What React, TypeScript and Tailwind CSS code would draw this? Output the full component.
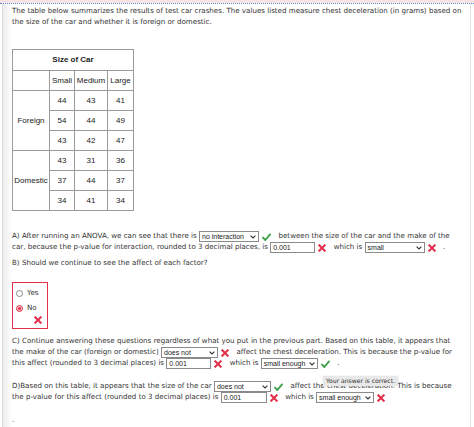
import React from 'react';

const txt = '#333333';

function Check() {
  return (
    <svg width="9" height="8" viewBox="0 0 9 8" className="mx-[3px] shrink-0">
      <path d="M1 4.6 L3.4 7 L8 1.4" fill="none" stroke="#3fa34d" strokeWidth="1.9" strokeLinecap="round" strokeLinejoin="round" />
    </svg>
  );
}

function Cross() {
  return (
    <svg width="8" height="8" viewBox="0 0 8 8" className="mx-[3px] shrink-0">
      <path d="M1.3 1.3 L6.7 6.7 M6.7 1.3 L1.3 6.7" fill="none" stroke="#e2304a" strokeWidth="2" strokeLinecap="square" />
    </svg>
  );
}

function Select({ value, w }: { value: string; w: string }) {
  return (
    <span className={`inline-flex items-center justify-between h-[11px] border border-[#8a8a8a] bg-white px-[2px] shrink-0 ${w}`}>
      <span className="text-[7px] leading-none text-[#222] font-['Liberation_Sans',Arial,sans-serif]">{value}</span>
      <svg width="6" height="4" viewBox="0 0 6 4">
        <path d="M0.6 0.6 L3 3 L5.4 0.6" fill="none" stroke="#333" strokeWidth="1.1" />
      </svg>
    </span>
  );
}

function Input({ w }: { w: string }) {
  return (
    <span className={`inline-flex items-center h-[11px] border border-[#8a8a8a] bg-white px-[2px] shrink-0 ${w}`}>
      <span className="text-[7px] leading-none text-[#222] font-['Liberation_Sans',Arial,sans-serif]">0.001</span>
    </span>
  );
}

function Line({ children, className = '' }: { children: React.ReactNode; className?: string }) {
  return <div className={`flex items-center h-[11px] whitespace-pre ${className}`}>{children}</div>;
}

const rows = [
  ['Foreign', ['44', '43', '41'], ['54', '44', '49'], ['43', '42', '47']],
  ['Domestic', ['43', '31', '36'], ['37', '44', '37'], ['34', '41', '34']],
] as const;

function CarTable() {
  const cell = 'border border-[#9a9a9a] text-center align-middle h-[20px] p-0';
  return (
    <table className="border-collapse text-[8px] text-[#222] font-['Liberation_Sans',Arial,sans-serif]">
      <colgroup>
        <col className="w-[37px]" />
        <col className="w-[25px]" />
        <col className="w-[33px]" />
        <col className="w-[26px]" />
      </colgroup>
      <tbody>
        <tr>
          <td colSpan={4} className={`${cell} h-[21px] font-bold`}>Size of Car</td>
        </tr>
        <tr>
          <td className={cell}></td>
          <td className={cell}>Small</td>
          <td className={cell}>Medium</td>
          <td className={cell}>Large</td>
        </tr>
        {rows.map((g) =>
          [g[1], g[2], g[3]].map((r, i) => (
            <tr key={g[0] + i}>
              {i === 0 && (
                <td rowSpan={3} className={cell}>{g[0]}</td>
              )}
              {r.map((v, j) => (
                <td key={j} className={cell}>{v}</td>
              ))}
            </tr>
          ))
        )}
      </tbody>
    </table>
  );
}

export default function App() {
  return (
    <div className="w-[474px] h-[427px] bg-white overflow-hidden relative" style={{ color: txt }}>
      <div className="h-[3px] bg-[#f5e3e5]" />
      <div className="border-t border-dotted border-[#5b87c9]" />
      <div className="flex h-[423px]">
        <div className="w-[10px] shrink-0 border-l border-[#dcdcdc] ml-[2px] bg-gradient-to-r from-[#ececec] to-white" />
        <div className="flex-1 pt-[2px] text-[7.1px] font-['DejaVu_Sans',Verdana,sans-serif] relative">
          <Line>The table below summarizes the results of test car crashes. The values listed measure chest deceleration (in grams) based on</Line>
          <Line>the size of the car and whether it is foreign or domestic.</Line>

          <div className="mt-[21px]">
            <CarTable />
          </div>

          <div className="mt-[20px]">
            <Line>
              A) After running an ANOVA, we can see that there is <Select value="no interaction" w="w-[60px]" /><Check />  between the size of the car and the make of the
            </Line>
            <Line>
              car, because the p-value for interaction, rounded to 3 decimal places, is <Input w="w-[45px]" /><Cross />  which is <Select value="small" w="w-[60px]" /><Cross />  .
            </Line>
          </div>

          <Line className="mt-[5px]">B) Should we continue to see the affect of each factor?</Line>

          <div className="mt-[13px] w-[36px] h-[47px] border border-[#e2304a] flex flex-col pl-[3px] pt-[5px]">
            <div className="flex items-center h-[10px]">
              <span className="w-[7px] h-[7px] rounded-full border border-[#8a8a8a] bg-white" />
              <span className="ml-[4px]">Yes</span>
            </div>
            <div className="flex items-center h-[10px] mt-[5px]">
              <span className="w-[7px] h-[7px] rounded-full border border-[#e2304a] bg-[#f7c6cd] flex items-center justify-center">
                <span className="w-[3px] h-[3px] rounded-full bg-[#e2304a]" />
              </span>
              <span className="ml-[4px]">No</span>
            </div>
            <div className="flex justify-end pr-[2px] mt-[3px]">
              <Cross />
            </div>
          </div>

          <div className="mt-[7px]">
            <Line>C) Continue answering these questions regardless of what you put in the previous part. Based on this table, it appears that</Line>
            <Line>
              the make of the car (foreign or domestic) <Select value="does not" w="w-[57px]" /><Cross />  affect the chest deceleration. This is because the p-value for
            </Line>
            <Line>
              this affect (rounded to 3 decimal places) is <Input w="w-[45px]" /><Cross />  which is <Select value="small enough" w="w-[57px]" /><Check />  .
            </Line>
          </div>

          <div className="mt-[12px]">
            <Line>
              D)Based on this table, it appears that the size of the car <Select value="does not" w="w-[57px]" /><Check />  affect the chest deceleration. This is because
            </Line>
            <Line>
              the p-value for this affect (rounded to 3 decimal places) is <Input w="w-[46px]" /><Cross />  which is <Select value="small enough" w="w-[58px]" /><Cross />
            </Line>
          </div>

          <Line className="mt-[12px]">.</Line>

          <div className="absolute left-[311px] top-[372px] bg-[#e8e8e8] px-[3px] h-[10px] flex items-center text-[6.1px] text-[#333] whitespace-nowrap shadow-[0_0_1px_rgba(0,0,0,0.2)]">
            Your answer is correct.
          </div>
        </div>
        <div className="w-[4px] shrink-0 border-l border-[#e2e2e2]" />
      </div>
    </div>
  );
}
